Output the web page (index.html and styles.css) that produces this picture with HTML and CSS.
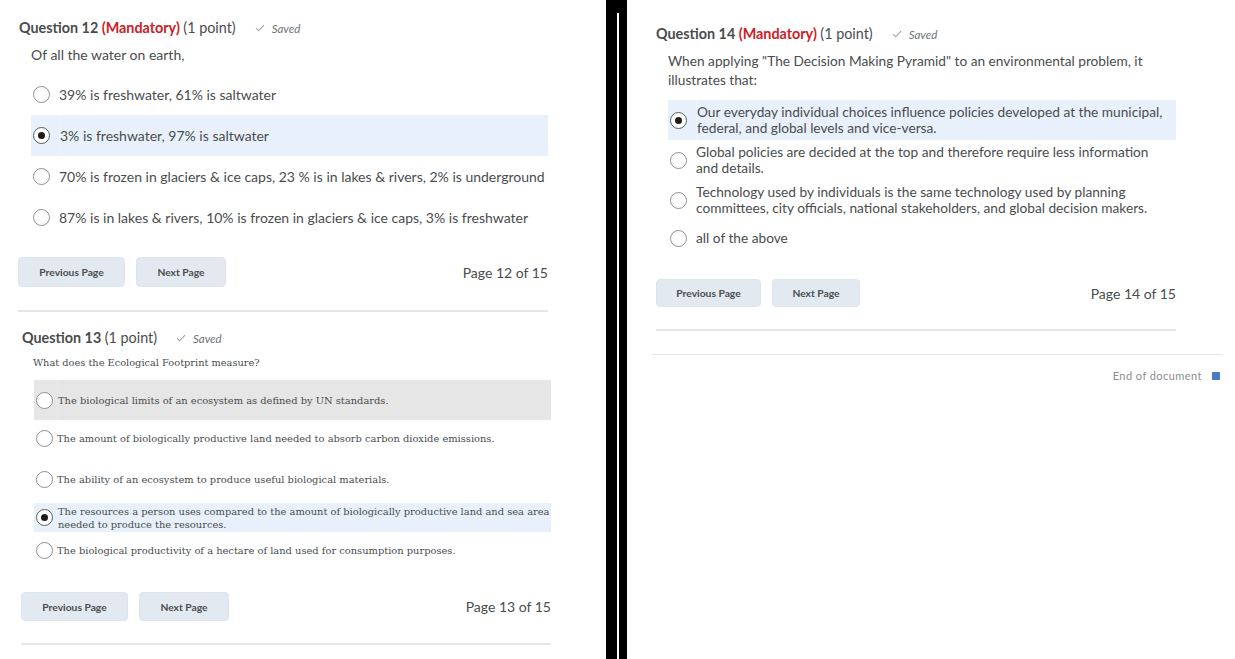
FILE: index.html
```html
<!DOCTYPE html>
<html>
<head>
<meta charset="utf-8">
<link rel="stylesheet" href="styles.css">
</head>
<body>
<div class="page">
  <div class="left">
    <section class="q q12">
      <h2 class="qtitle">Question 12 <span class="mand">(Mandatory)</span> <span class="pts">(1 point)</span><span class="saved"><svg class="chk" viewBox="0 0 10 8" width="10" height="8"><polyline points="1,4.2 3.6,6.8 9,1.2" fill="none" stroke="#9ea2a6" stroke-width="1.1"/></svg>Saved</span></h2>
      <p class="prompt">Of all the water on earth,</p>
      <div class="opts">
        <div class="opt"><span class="rcell"><span class="radio"></span></span><span class="otext">39% is freshwater, 61% is saltwater</span></div>
        <div class="opt sel"><span class="rcell"><span class="radio on"></span></span><span class="otext">3% is freshwater, 97% is saltwater</span></div>
        <div class="opt"><span class="rcell"><span class="radio"></span></span><span class="otext">70% is frozen in glaciers &amp; ice caps, 23 % is in lakes &amp; rivers, 2% is underground</span></div>
        <div class="opt"><span class="rcell"><span class="radio"></span></span><span class="otext">87% is in lakes &amp; rivers, 10% is frozen in glaciers &amp; ice caps, 3% is freshwater</span></div>
      </div>
      <div class="nav">
        <button class="btn prev">Previous Page</button>
        <button class="btn next">Next Page</button>
        <span class="pageno">Page 12 of 15</span>
      </div>
      <hr class="rule">
    </section>

    <section class="q q13">
      <h2 class="qtitle">Question 13 <span class="pts">(1 point)</span><span class="saved"><svg class="chk" viewBox="0 0 10 8" width="10" height="8"><polyline points="1,4.2 3.6,6.8 9,1.2" fill="none" stroke="#9ea2a6" stroke-width="1.1"/></svg>Saved</span></h2>
      <p class="prompt serif">What does the Ecological Footprint measure?</p>
      <div class="opts serifopts">
        <div class="opt grey"><span class="rcell"><span class="radio"></span></span><span class="otext">The biological limits of an ecosystem as defined by UN standards.</span></div>
        <div class="opt"><span class="rcell"><span class="radio"></span></span><span class="otext">The amount of biologically productive land needed to absorb carbon dioxide emissions.</span></div>
        <div class="opt"><span class="rcell"><span class="radio"></span></span><span class="otext">The ability of an ecosystem to produce useful biological materials.</span></div>
        <div class="opt sel"><span class="rcell"><span class="radio on"></span></span><span class="otext">The resources a person uses compared to the amount of biologically productive land and sea area needed to produce the resources.</span></div>
        <div class="opt"><span class="rcell"><span class="radio"></span></span><span class="otext">The biological productivity of a hectare of land used for consumption purposes.</span></div>
      </div>
      <div class="nav">
        <button class="btn prev">Previous Page</button>
        <button class="btn next">Next Page</button>
        <span class="pageno">Page 13 of 15</span>
      </div>
      <hr class="rule">
    </section>
  </div>

  <div class="divider"><div class="divline"></div></div>

  <div class="right">
    <section class="q q14">
      <h2 class="qtitle">Question 14 <span class="mand">(Mandatory)</span> <span class="pts">(1 point)</span><span class="saved"><svg class="chk" viewBox="0 0 10 8" width="10" height="8"><polyline points="1,4.2 3.6,6.8 9,1.2" fill="none" stroke="#9ea2a6" stroke-width="1.1"/></svg>Saved</span></h2>
      <p class="prompt">When applying "The Decision Making Pyramid" to an environmental problem, it illustrates that:</p>
      <div class="opts">
        <div class="opt sel"><span class="rcell"><span class="radio on"></span></span><span class="otext">Our everyday individual choices influence policies developed at the municipal, federal, and global levels and vice-versa.</span></div>
        <div class="opt"><span class="rcell"><span class="radio"></span></span><span class="otext">Global policies are decided at the top and therefore require less information and details.</span></div>
        <div class="opt"><span class="rcell"><span class="radio"></span></span><span class="otext">Technology used by individuals is the same technology used by planning committees, city officials, national stakeholders, and global decision makers.</span></div>
        <div class="opt"><span class="rcell"><span class="radio"></span></span><span class="otext">all of the above</span></div>
      </div>
      <div class="nav">
        <button class="btn prev">Previous Page</button>
        <button class="btn next">Next Page</button>
        <span class="pageno">Page 14 of 15</span>
      </div>
      <hr class="rule">
    </section>
    <hr class="rule2">
    <div class="eod">End of document <span class="sq"></span></div>
  </div>
</div>
</body>
</html>
```
FILE: styles.css
```css
* { box-sizing: border-box; }
html, body { margin: 0; padding: 0; }
body {
  width: 1235px;
  height: 659px;
  overflow: hidden;
  background: #fff;
  font-family: Lato, "Open Sans", sans-serif;
  color: #494c4e;
}
.page { display: flex; height: 659px; }
.left { width: 606px; flex: none; }
.divider {
  width: 21px;
  flex: none;
  background: #000;
  padding: 13px 0 0 11px;
}
.divline { width: 2px; height: 100%; background: #fff; }
.right { flex: 1; }

.q { display: flex; flex-direction: column; }
.qtitle {
  margin: 0;
  font-size: 14.35px;
  line-height: 17px;
  height: 17px;
  font-weight: 700;
  color: #494c4e;
  white-space: nowrap;
}
.mand { color: #cd2026; }
.pts { font-weight: 400; }
.saved {
  margin-left: 19px;
  font-size: 11.5px;
  font-style: italic;
  font-weight: 400;
  color: #6e7376;
  display: inline-flex;
  align-items: center;
  vertical-align: 1px;
}
.chk { margin-right: 7px; }
.prompt {
  margin: 0;
  font-size: 14px;
  line-height: 19px;
}
.opts { display: flex; flex-direction: column; }
.opt {
  display: flex;
  align-items: center;
  font-size: 14px;
  line-height: 16px;
}
.opt.sel { background: #e8f1fb; }
.opt.grey { background: #e6e6e6; }
.rcell {
  display: flex;
  align-items: center;
  align-self: stretch;
  flex: none;
}
.opt.sel .rcell { border-right: 1px solid #edf4fc; }
.opt.grey .rcell { border-right: 1px solid #ebebeb; }
.radio {
  width: 17px;
  height: 17px;
  border-radius: 50%;
  border: 1px solid #8b9094;
  background: #fff;
  display: flex;
  align-items: center;
  justify-content: center;
}
.radio.on { border-color: #565a5c; }
.radio.on::after {
  content: "";
  width: 7px;
  height: 7px;
  border-radius: 50%;
  background: #1c1c1c;
}
.nav { display: flex; align-items: center; }
.btn {
  font-family: Lato, "Open Sans", sans-serif;
  font-size: 10.3px;
  font-weight: 700;
  color: #494c4e;
  background: #e3e9f1;
  border: 1px solid #dfe5ee;
  border-radius: 4px;
  padding: 0;
  height: 30px;
}
.pageno { margin-left: auto; font-size: 14px; }
.rule { margin: 0; border: 0; border-top: 2px solid #e3e6ea; }

/* Q12 */
.q12 { padding: 19px 0 0 18px; width: 548px; }
.q12 .qtitle { margin-left: 1px; }
.q12 .prompt { margin: 9px 0 0 13px; }
.q12 .opts { margin: 10px 0 0 13px; }
.q12 .opt { height: 41px; }
.q12 .rcell { padding: 0 9px 0 2px; }
.q12 .nav { margin-top: 19px; }
.q12 .prev { width: 107px; }
.q12 .next { width: 90px; margin-left: 11px; }
.q12 .rule { margin-top: 23px; }

/* Q13 */
.q13 { padding: 17px 0 0 21px; width: 551px; }
.q13 .qtitle { margin-left: 1px; }
.serif {
  font-family: "DejaVu Serif", serif;
  font-size: 9.8px;
  line-height: 12px;
}
.q13 .prompt { margin: 11px 0 0 12px; }
.serifopts .opt {
  font-family: "DejaVu Serif", serif;
  font-size: 9.9px;
  line-height: 13px;
}
.q13 .opts { margin: 11px 0 0 13px; }
.q13 .opt:nth-child(1) { height: 40px; }
.q13 .opt:nth-child(2) { height: 36px; }
.q13 .opt:nth-child(3) { height: 47px; }
.q13 .opt:nth-child(4) { height: 29px; }
.q13 .opt:nth-child(5) { height: 36px; }
.q13 .rcell { padding: 0 4px 0 2px; }
.q13 .nav { margin-top: 24px; }
.q13 .btn { height: 29px; }
.q13 .prev { width: 107px; }
.q13 .next { width: 90px; margin-left: 11px; }
.q13 .rule { margin-top: 22px; }

/* Q14 */
.q14 { padding: 25px 0 0 29px; width: 549px; }
.q14 .prompt { margin: 9px 0 0 12px; width: 490px; font-size: 13.7px; }
.q14 .opts { margin: 11px 0 0 12px; }
.q14 .opt { font-size: 13.7px; }
.q14 .otext { padding-right: 12px; }
.q14 .opt:nth-child(1),
.q14 .opt:nth-child(2),
.q14 .opt:nth-child(3) { height: 40px; }
.q14 .opt:nth-child(4) { height: 36px; }
.q14 .rcell { padding: 0 9px 0 2px; }
.q14 .nav { margin-top: 23px; }
.q14 .btn { height: 28px; }
.q14 .prev { width: 105px; }
.q14 .next { width: 88px; margin-left: 11px; }
.q14 .rule { margin-top: 22px; }
.rule2 { margin: 23px 13px 0 25px; border: 0; border-top: 1px solid #e3e6ea; }
.eod {
  display: flex;
  justify-content: flex-end;
  align-items: center;
  margin: 14px 15px 0 0;
  font-size: 11px;
  line-height: 13px;
  letter-spacing: 0.45px;
  color: #8a8d90;
}
.sq { width: 8px; height: 8px; background: #4a7cc0; margin-left: 10px; }
```
